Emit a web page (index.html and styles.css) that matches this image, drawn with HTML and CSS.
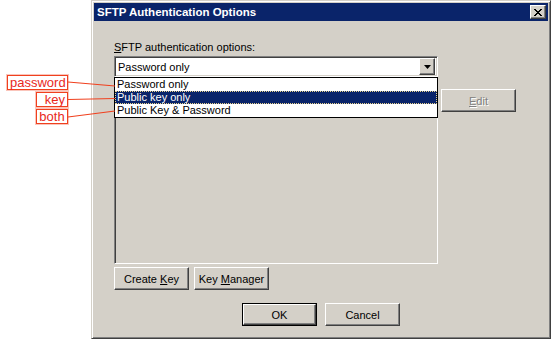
FILE: index.html
```html
<!DOCTYPE html>
<html lang="en">
<head>
    <meta charset="UTF-8">
    <title>SFTP Authentication Options</title>
    <link rel="stylesheet" href="styles.css">
</head>
<body>
    <!-- 대화상자 -->
    <div class="dialog">
        <div class="titlebar">
            <span class="title">SFTP Authentication Options</span>
            <span class="btn close">
                <svg width="8" height="7" viewBox="0 0 8 7"><path d="M0 0h2v1h1v1h2V1h1V0h2v1H7v1H6v1H5v1h1v1h1v1h1v1H6V6H5V5H3v1H2v1H0V6h1V5h1V4h1V3H2V2H1V1H0z" fill="#000"/></svg>
            </span>
        </div>
        <div class="body">
            <div class="label"><u>S</u>FTP authentication options:</div>
            <div class="combo">
                <span class="value">Password only</span>
                <span class="btn arrow"><svg width="7" height="4" viewBox="0 0 7 4"><path d="M0 0h7L3.5 4z" fill="#000"/></svg></span>
                <!-- 펼쳐진 목록 -->
                <ul class="droplist">
                    <li>Password only</li>
                    <li class="sel">Public key only</li>
                    <li>Public Key &amp; Password</li>
                </ul>
            </div>
            <div class="row">
                <div class="listbox"></div>
                <span class="btn push disabled"><span><u>E</u>dit</span></span>
            </div>
            <div class="keys">
                <span class="btn push"><span>Create <u>K</u>ey</span></span>
                <span class="btn push"><span>Key <u>M</u>anager</span></span>
            </div>
            <div class="actions">
                <span class="btn push default"><span>OK</span></span>
                <span class="btn push"><span>Cancel</span></span>
            </div>
        </div>
    </div>

    <!-- 설명 라벨 -->
    <span class="note n1">password</span>
    <span class="note n2">key</span>
    <span class="note n3">both</span>
    <svg class="leads" width="120" height="130" viewBox="0 0 120 130">
        <g stroke="#f0401e" stroke-width="1.2" fill="none">
            <line x1="68" y1="82" x2="115" y2="86"/>
            <line x1="68" y1="99.5" x2="115" y2="98.5"/>
            <line x1="68" y1="117" x2="115" y2="111"/>
        </g>
    </svg>
</body>
</html>
```

FILE: styles.css
```css
:root{
    --face: #d4d0c8;
    --navy: #0a246a;
}
body{
    margin: 0;
    width: 551px;
    height: 341px;
    background: #fff;
    font-family: "Liberation Sans", Arial, sans-serif;
    font-size: 11px;
    color: #000;
    overflow: hidden;
}
u{
    text-decoration: underline;
    text-underline-offset: 1px;
}

/* 창 */
.dialog{
    position: absolute;
    left: 91px;
    top: 0;
    width: 454px;
    height: 333px;
    padding: 2px;
    background: var(--face);
    border: 1px solid;
    border-color: var(--face) #404040 #404040 var(--face);
    box-shadow: inset 1px 1px #fff, inset -1px -1px #808080;
}
.titlebar{
    display: flex;
    align-items: center;
    justify-content: space-between;
    height: 18px;
    padding: 0 2px 0 3px;
    background: var(--navy);
}
.title{
    color: #fff;
    font-weight: bold;
    font-size: 11.5px;
}

/* 버튼 공통 */
.btn{
    display: inline-flex;
    align-items: center;
    justify-content: center;
    box-sizing: border-box;
    background: var(--face);
    border: 1px solid;
    border-color: #fff #404040 #404040 #fff;
    box-shadow: inset -1px -1px #808080;
}
.close{
    width: 16px;
    height: 14px;
}
.push{
    width: 75px;
    height: 23px;
}
.disabled{
    color: #808080;
    text-shadow: 1px 1px #fff;
}
.default{
    border: 1px solid #000;
    box-shadow: none;
    padding: 0;
}
.default>span{
    display: flex;
    align-items: center;
    justify-content: center;
    width: 100%;
    height: 100%;
    box-sizing: border-box;
    border: 1px solid;
    border-color: #fff #404040 #404040 #fff;
    box-shadow: inset -1px -1px #808080;
}

/* 본문 */
.body{
    padding: 20px 0 0 20px;
}
.label{
    height: 13px;
    line-height: 13px;
    margin-bottom: 2px;
}
.combo{
    position: relative;
    display: flex;
    align-items: center;
    justify-content: space-between;
    box-sizing: border-box;
    width: 324px;
    height: 21px;
    padding: 0 2px 0 3px;
    background: #fff;
    border: 1px solid;
    border-color: #808080 #fff #fff #808080;
    box-shadow: inset 1px 1px #404040, inset -1px -1px var(--face);
}
.arrow{
    width: 16px;
    height: 17px;
}
.droplist{
    position: absolute;
    z-index: 2;
    left: -1px;
    top: 20px;
    width: 324px;
    margin: 0;
    padding: 0;
    list-style: none;
    background: #fff;
    border: 1px solid #000;
    box-sizing: border-box;
}
.droplist li{
    height: 13px;
    line-height: 13px;
    padding-left: 2px;
}
.droplist .sel{
    background: var(--navy);
    color: #fff;
    outline: 1px dotted #e9d28c;
    outline-offset: -1px;
}

.row{
    display: flex;
    align-items: flex-start;
    gap: 3px;
    margin-top: 12px;
}
.listbox{
    box-sizing: border-box;
    width: 324px;
    height: 175px;
    border: 1px solid;
    border-color: #808080 #fff #fff #808080;
    box-shadow: inset 1px 1px #404040, inset -1px -1px var(--face);
}
.keys{
    display: flex;
    gap: 5px;
    margin-top: 3px;
}
.actions{
    display: flex;
    justify-content: center;
    gap: 8px;
    margin-top: 13px;
    padding-right: 20px;
}

/* 설명 라벨 */
.note{
    position: absolute;
    z-index: 3;
    box-sizing: border-box;
    height: 15px;
    line-height: 13px;
    padding: 0 2px;
    font-size: 13px;
    color: #e8281c;
    text-align: right;
    border: 1px solid #f0401e;
    box-shadow: 0 0 0 1px rgba(240,90,60,.35);
    background: #fff;
}
.n1{ left: 7px; top: 75px; width: 61px; }
.n2{ left: 36px; top: 92px; width: 32px; }
.n3{ left: 36px; top: 109px; width: 32px; text-align: center; }
.leads{
    position: absolute;
    z-index: 3;
    left: 0;
    top: 0;
}
```
